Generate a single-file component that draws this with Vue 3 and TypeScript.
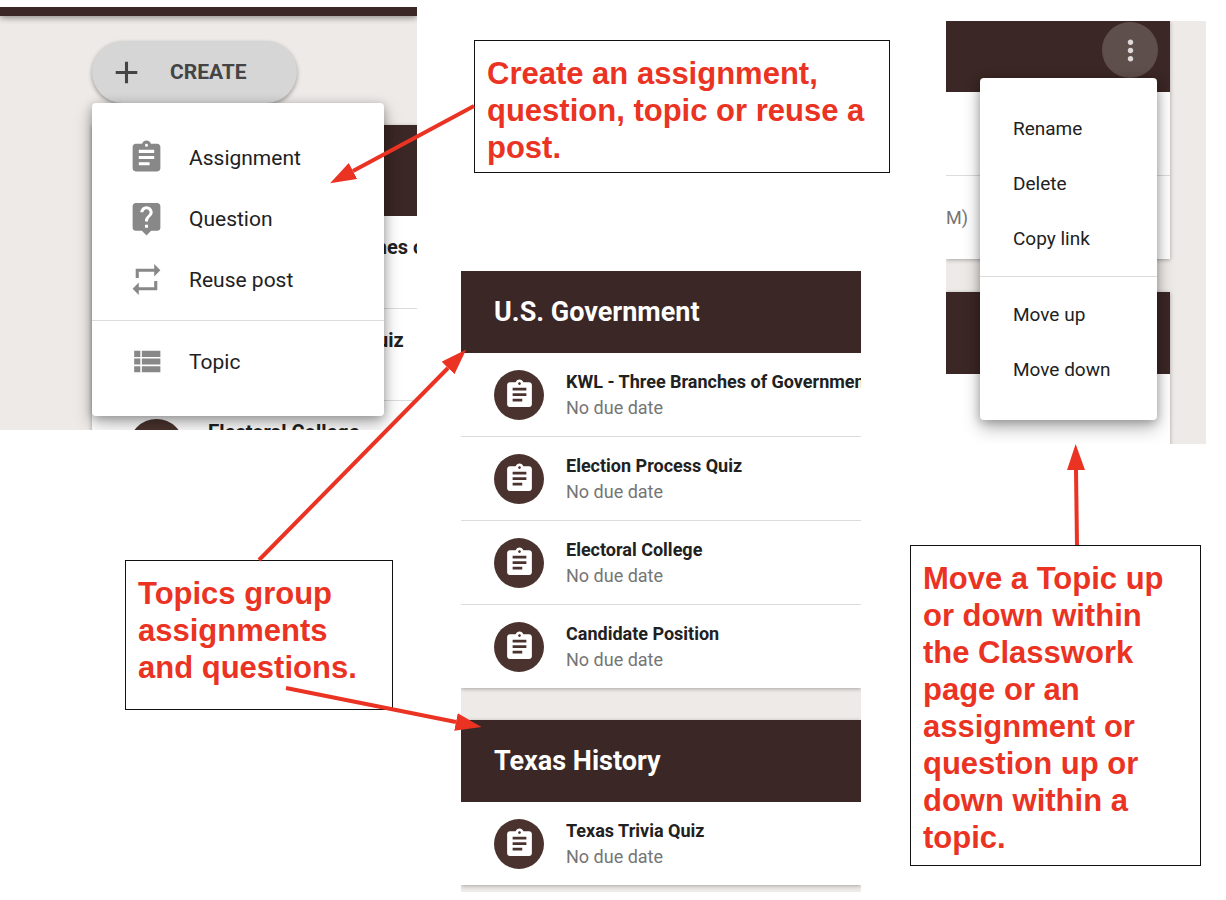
<script setup lang="ts">
interface MenuItem {
  label: string
  icon: string
}

interface Topic {
  name: string
  work: string[]
}

const icons: Record<string, string> = {
  add: 'M19 13h-6v6h-2v-6H5v-2h6V5h2v6h6v2z',
  assignment:
    'M19 3h-4.18C14.4 1.84 13.3 1 12 1c-1.3 0-2.4.84-2.82 2H5c-1.1 0-2 .9-2 2v14c0 1.1.9 2 2 2h14c1.1 0 2-.9 2-2V5c0-1.1-.9-2-2-2zm-7 0c.55 0 1 .45 1 1s-.45 1-1 1-1-.45-1-1 .45-1 1-1zm2 14H7v-2h7v2zm3-4H7v-2h10v2zm0-4H7V7h10v2z',
  question:
    'M19 2H5c-1.11 0-2 .9-2 2v14c0 1.1.89 2 2 2h4l3 3 3-3h4c1.1 0 2-.9 2-2V4c0-1.1-.9-2-2-2zm-6 16h-2v-2h2v2zm2.07-7.75l-.9.92C13.45 11.9 13 12.5 13 14h-2v-.5c0-1.1.45-2.1 1.17-2.83l1.24-1.26c.37-.36.59-.86.59-1.41 0-1.1-.9-2-2-2s-2 .9-2 2H8c0-2.21 1.79-4 4-4s4 1.79 4 4c0 .88-.36 1.68-.93 2.25z',
  reuse: 'M7 7h10v3l4-4-4-4v3H5v6h2V7zm10 10H7v-3l-4 4 4 4v-3h12v-6h-2v4z',
  topic:
    'M4 14h4v-4H4v4zm0 5h4v-4H4v4zM4 9h4V5H4v4zm5 5h12v-4H9v4zm0 5h12v-4H9v4zM9 5v4h12V5H9z',
  more: 'M12 8c1.1 0 2-.9 2-2s-.9-2-2-2-2 .9-2 2 .9 2 2 2zm0 2c-1.1 0-2 .9-2 2s.9 2 2 2 2-.9 2-2-.9-2-2-2zm0 6c-1.1 0-2 .9-2 2s.9 2 2 2 2-.9 2-2-.9-2-2-2z',
}

const createGroups: MenuItem[][] = [
  [
    { label: 'Assignment', icon: 'assignment' },
    { label: 'Question', icon: 'question' },
    { label: 'Reuse post', icon: 'reuse' },
  ],
  [{ label: 'Topic', icon: 'topic' }],
]

const topicGroups: string[][] = [
  ['Rename', 'Delete', 'Copy link'],
  ['Move up', 'Move down'],
]

const behindMenu: string[] = [
  'KWL - Three Branches of Government',
  'Election Process Quiz',
  'Electoral College',
]

const topics: Topic[] = [
  {
    name: 'U.S. Government',
    work: [
      'KWL - Three Branches of Government',
      'Election Process Quiz',
      'Electoral College',
      'Candidate Position',
    ],
  },
  { name: 'Texas History', work: ['Texas Trivia Quiz'] },
]
</script>

<template>
  <main class="guide">
    <section class="col">
      <div class="shot create-shot">
        <div class="app-bar"></div>
        <div class="create">
          <button class="create-button" type="button">
            <svg class="icon" viewBox="0 0 24 24" aria-hidden="true"><path :d="icons.add" /></svg>
            CREATE
          </button>
          <div class="menu create-menu">
            <div v-for="(group, g) in createGroups" :key="g" class="group">
              <button v-for="item in group" :key="item.label" class="item" type="button">
                <svg class="icon" viewBox="0 0 24 24" aria-hidden="true"><path :d="icons[item.icon]" /></svg>
                {{ item.label }}
              </button>
            </div>
          </div>
        </div>
        <div class="card large">
          <div class="band"></div>
          <ul class="rows">
            <li v-for="title in behindMenu" :key="title" class="row">
              <span class="badge">
                <svg class="icon" viewBox="0 0 24 24" aria-hidden="true"><path :d="icons.assignment" /></svg>
              </span>
              <div class="text"><p class="title">{{ title }}</p></div>
            </li>
          </ul>
        </div>
      </div>
      <p class="note note-topics">Topics group assignments and questions.</p>
    </section>

    <section class="col">
      <p class="note note-create">Create an assignment, question, topic or reuse a post.</p>
      <div class="shot topics-shot">
        <article v-for="topic in topics" :key="topic.name" class="card">
          <h2 class="band">{{ topic.name }}</h2>
          <ul class="rows">
            <li v-for="title in topic.work" :key="title" class="row">
              <span class="badge">
                <svg class="icon" viewBox="0 0 24 24" aria-hidden="true"><path :d="icons.assignment" /></svg>
              </span>
              <div class="text">
                <p class="title">{{ title }}</p>
                <p class="due">No due date</p>
              </div>
            </li>
          </ul>
        </article>
      </div>
    </section>

    <section class="col">
      <div class="shot move-shot">
        <div class="card">
          <div class="band more-band">
            <div class="more">
              <button class="more-button" type="button" aria-label="Topic options">
                <svg class="icon" viewBox="0 0 24 24" aria-hidden="true"><path :d="icons.more" /></svg>
              </button>
              <div class="menu topic-menu">
                <div v-for="(group, g) in topicGroups" :key="g" class="group">
                  <button v-for="label in group" :key="label" class="item" type="button">{{ label }}</button>
                </div>
              </div>
            </div>
          </div>
          <ul class="rows">
            <li class="row"></li>
            <li class="row tail">M)</li>
          </ul>
        </div>
        <div class="card">
          <div class="band"></div>
          <ul class="rows"><li class="row"></li></ul>
        </div>
      </div>
      <p class="note note-move">
        Move a Topic up or down within the Classwork page or an assignment or question up or down within a topic.
      </p>
    </section>

    <svg class="arrows" viewBox="0 0 1226 900" preserveAspectRatio="none" aria-hidden="true">
      <defs>
        <marker id="head" markerUnits="userSpaceOnUse" markerWidth="26" markerHeight="18" refX="0" refY="9" orient="auto">
          <path d="M0 0L26 9L0 18Z" fill="#ea3323" />
        </marker>
      </defs>
      <g stroke="#ea3323" stroke-width="4">
        <path d="M474 106L353 171" marker-end="url(#head)" />
        <path d="M259 560L448 368" marker-end="url(#head)" />
        <path d="M286 688L456 722" marker-end="url(#head)" />
        <path d="M1077 545L1076 470" marker-end="url(#head)" />
      </g>
    </svg>
  </main>
</template>

<style>
body {
  margin: 0;
  background: #fff;
}
</style>

<style scoped>
.guide {
  position: relative;
  display: grid;
  grid-template-columns: minmax(0, 461fr) minmax(0, 449fr) minmax(0, 316fr);
  min-height: 900px;
  font-family: Roboto, "Liberation Sans", sans-serif;
  color: #212121;
}

.guide *,
.guide {
  box-sizing: border-box;
}

p,
h2,
ul {
  margin: 0;
  padding: 0;
}

ul {
  list-style: none;
}

button {
  border: 0;
  background: none;
  font-family: inherit;
  cursor: pointer;
}

.icon {
  display: block;
  flex: none;
  width: 37px;
  height: 37px;
  fill: currentColor;
}

.shot {
  overflow: hidden;
  background: #eeeae7;
}

.create-shot {
  height: 423px;
  margin: 7px 44px 0 0;
}

.move-shot {
  height: 423px;
  margin: 21px 20px 0 36px;
  padding-right: 36px;
}

.topics-shot {
  margin: 98px 49px 0 0;
  padding-bottom: 7px;
}

.app-bar {
  height: 9px;
  background: #3b2725;
  box-shadow: 0 2px 6px rgba(0, 0, 0, 0.4);
}

.create {
  position: relative;
  z-index: 1;
  margin: 25px 0 22px 92px;
}

.create-button {
  display: flex;
  align-items: center;
  gap: 25px;
  width: 205px;
  height: 62px;
  padding: 0 16px;
  border-radius: 31px;
  background: #d6d6d6;
  box-shadow: 0 2px 4px rgba(0, 0, 0, 0.35);
  color: #444;
  font-size: 21px;
  font-weight: 700;
}

.menu {
  position: absolute;
  top: 100%;
  border-radius: 4px;
  background: #fff;
  box-shadow: 0 8px 18px rgba(0, 0, 0, 0.28), 0 2px 10px rgba(0, 0, 0, 0.25);
}

.create-menu {
  left: 0;
  width: 292px;
  padding: 24px 0;
}

.topic-menu {
  right: 1px;
  width: 177px;
  padding: 23px 0;
}

.group + .group {
  margin-top: 10px;
  padding-top: 10px;
  border-top: 1px solid #dcdcdc;
}

.item {
  display: flex;
  align-items: center;
  width: 100%;
  color: #212121;
  white-space: nowrap;
}

.create-menu .item {
  gap: 24px;
  height: 61px;
  padding: 0 36px;
  font-size: 21px;
}

.create-menu .icon {
  color: #888;
}

.topic-menu .item {
  height: 55px;
  padding: 0 33px;
  font-size: 19px;
}

.card {
  background: #fff;
  box-shadow: 0 1px 4px rgba(0, 0, 0, 0.3);
}

.card + .card {
  margin-top: 32px;
}

.band {
  display: flex;
  align-items: center;
  height: 82px;
  padding: 0 33px;
  background: #3b2725;
  color: #fff;
  font-size: 27px;
  font-weight: 700;
}

.row {
  display: flex;
  align-items: center;
  gap: 22px;
  height: 83px;
  padding-left: 33px;
  overflow: hidden;
}

.row + .row {
  height: 84px;
  border-top: 1px solid #dcdcdc;
}

.badge {
  display: flex;
  flex: none;
  align-items: center;
  justify-content: center;
  width: 50px;
  height: 50px;
  border-radius: 50%;
  background: #4a332e;
  color: #fff;
}

.badge .icon {
  width: 33px;
  height: 33px;
}

.text {
  min-width: 0;
  line-height: 26px;
  font-size: 18px;
  white-space: nowrap;
}

.title {
  font-weight: 700;
}

.due {
  color: #757575;
}

.large {
  margin-left: 92px;
}

.large .band {
  height: 91px;
}

.large .row {
  gap: 24px;
  height: 92px;
  padding-left: 37px;
}

.large .badge {
  width: 55px;
  height: 55px;
}

.large .text {
  align-self: flex-start;
  padding-top: 18px;
  font-size: 20px;
}

.move-shot .card + .card {
  margin-top: 33px;
}

.more-band {
  height: 71px;
  padding: 0 12px;
  justify-content: flex-end;
  align-items: flex-start;
}

.more {
  position: relative;
  z-index: 1;
  padding-top: 1px;
}

.more-button {
  display: flex;
  align-items: center;
  justify-content: center;
  width: 56px;
  height: 56px;
  padding: 0;
  border-radius: 50%;
  background: #5f4f4c;
  color: #dedada;
}

.more-button .icon {
  width: 33px;
  height: 33px;
}

.tail {
  padding-left: 0;
  color: #757575;
  font-size: 18px;
}

.note {
  border: 1px solid #111;
  padding: 14px 12px 0;
  color: #ea3323;
  font: bold 31px/37px "Liberation Sans", Arial, sans-serif;
}

.note-create {
  min-height: 133px;
  margin: 40px 20px 0 13px;
}

.note-topics {
  min-height: 150px;
  margin: 130px 68px 0 125px;
}

.note-move {
  min-height: 321px;
  margin: 101px 25px 0 0;
}

.arrows {
  position: absolute;
  top: 0;
  left: 0;
  z-index: 2;
  width: 100%;
  height: 900px;
  pointer-events: none;
}
</style>
